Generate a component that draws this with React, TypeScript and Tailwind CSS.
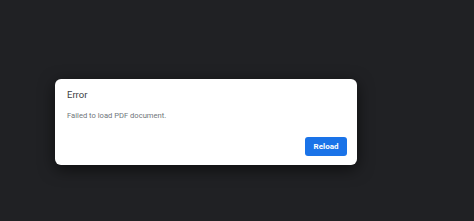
export default function App() {
  return (
    <div className="w-full h-[221px] bg-[#202124] overflow-hidden" style={{ fontFamily: "Roboto, 'Liberation Sans', sans-serif" }}>
      <div className="ml-[55px] mt-[79px] w-[302px] h-[86px] bg-white rounded-[6px] shadow-[0_4px_16px_rgba(0,0,0,0.6)] flex flex-col pl-[12px] pr-[10px]">
        <div className="mt-[10px] text-[9.5px] leading-[11px] text-[#3c4043]">Error</div>
        <div className="mt-[11px] text-[7.6px] leading-[9px] text-[#70757a]">Failed to load PDF document.</div>
        <div className="mt-auto mb-[9px] flex justify-end">
          <button className="w-[42px] h-[19px] rounded-[3px] bg-[#1a73e8] text-white text-[8px] font-bold leading-none">Reload</button>
        </div>
      </div>
    </div>
  );
}
